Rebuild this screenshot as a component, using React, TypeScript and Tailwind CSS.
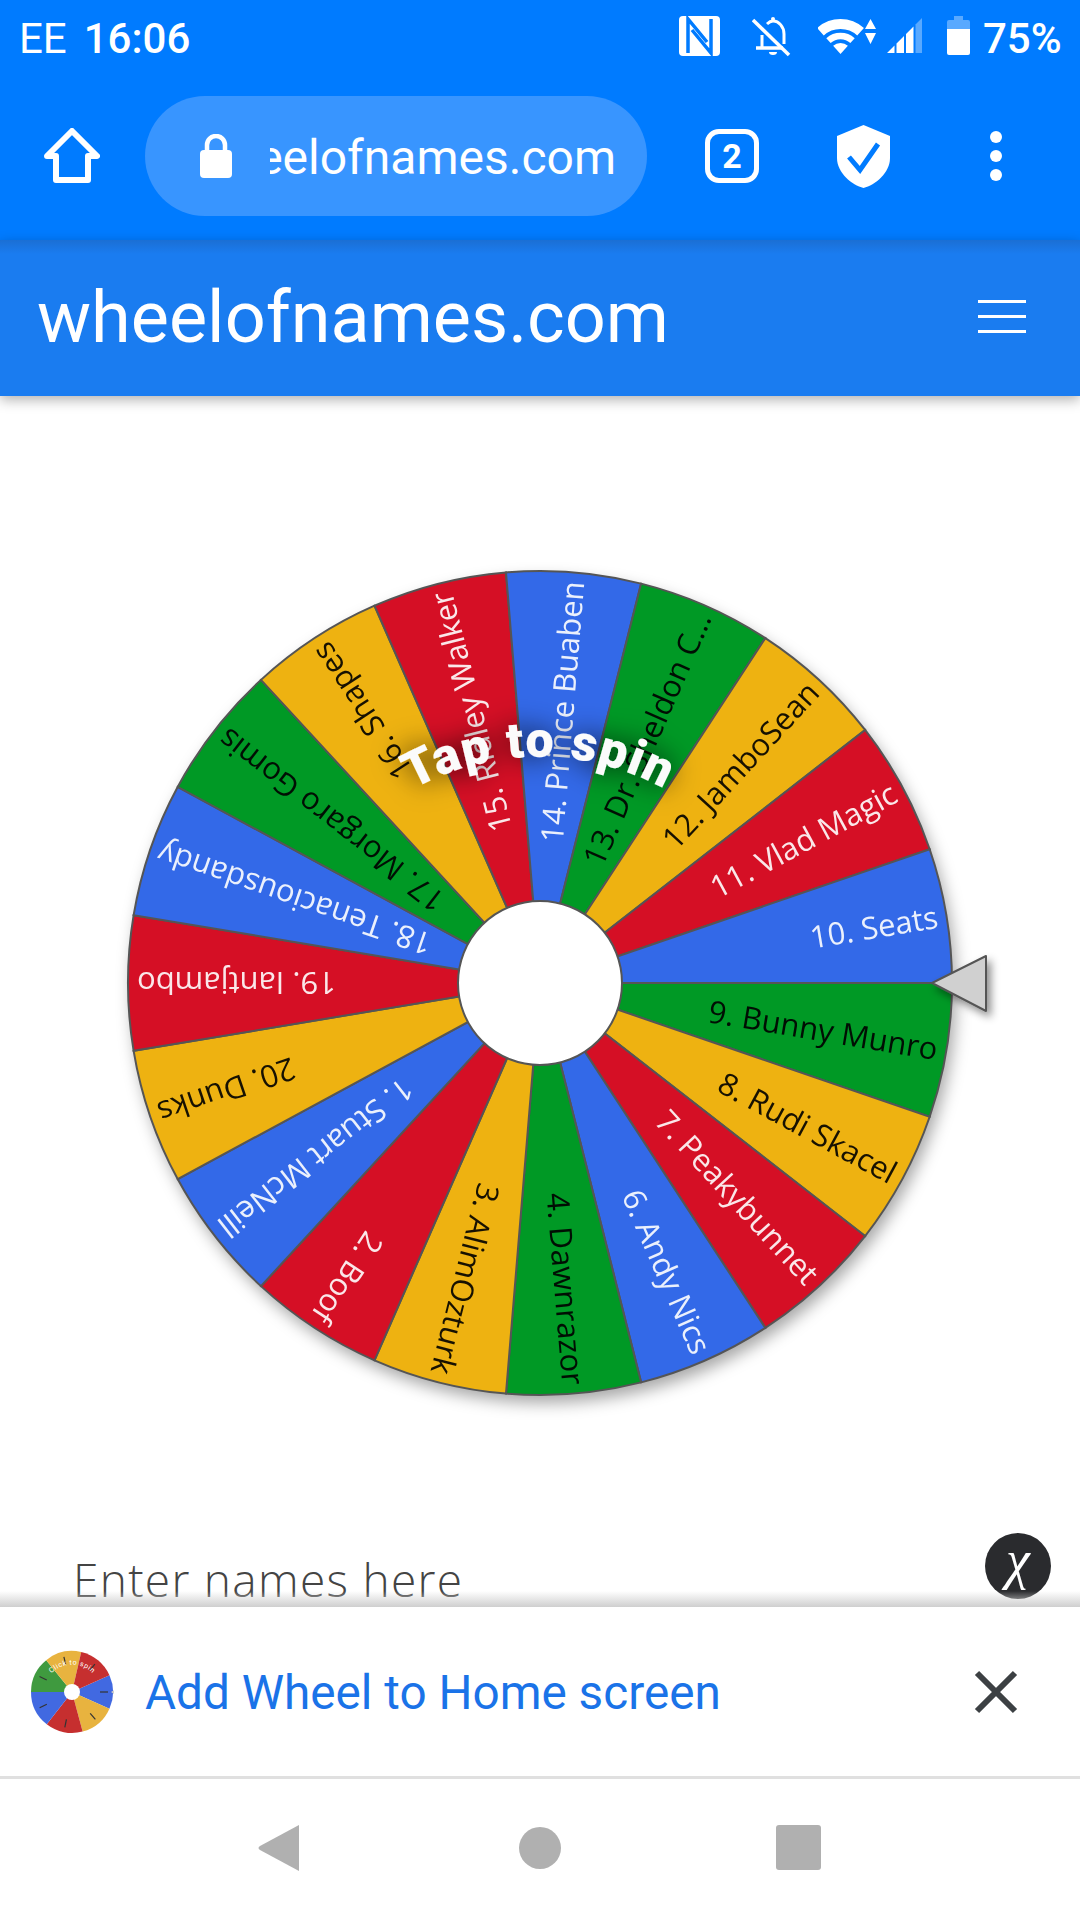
const names = ["9. Bunny Munro","8. Rudi Skacel","7. Peakybunnet","6. Andy Nics","4. Dawnrazor","3. AlimOzturk","2. Boof","1. Stuart McNeill","20. Dunks","19. Iantjambo","18. Tenaciousdandy","17. Morgaro Gomis","16. Shapes","15. Ridley Walker","14. Prince Buaben","13. Dr. Sheldon C...","12. JamboSean","11. Vlad Magic","10. Seats"];
const colors = ["#009925","#eeb211","#d50f25","#3369e8"];
const textColors = ["#000000","#000000","#ffffff","#ffffff"];
const STEP = 360 / 19;
const CX = 540, CY = 983, R = 412;

function pt(cx: number, cy: number, r: number, deg: number) {
  const a = (deg * Math.PI) / 180;
  return `${(cx + r * Math.cos(a)).toFixed(2)} ${(cy + r * Math.sin(a)).toFixed(2)}`;
}

function Wheel() {
  return (
    <svg className="block" width="1080" height="1060" viewBox="0 396 1080 1060">
      <defs>
        <filter id="ws" x="-10%" y="-10%" width="120%" height="120%">
          <feDropShadow dx="4" dy="8" stdDeviation="8" floodColor="#000" floodOpacity="0.35" />
        </filter>
        <filter id="ps" x="-40%" y="-40%" width="190%" height="190%">
          <feDropShadow dx="4" dy="5" stdDeviation="4" floodColor="#000" floodOpacity="0.45" />
        </filter>
        <filter id="ts" x="-20%" y="-50%" width="140%" height="200%">
          <feDropShadow dx="0" dy="0" stdDeviation="14" floodColor="#000" floodOpacity="0.85" />
        </filter>
        <path id="arc" d="M 394 801 A 260 260 0 0 1 684 801" />
      </defs>
      <circle cx={CX} cy={CY} r={R} fill="#777" filter="url(#ws)" />
      {names.map((n, i) => {
        const a0 = i * STEP, a1 = (i + 1) * STEP, mid = a0 + STEP / 2;
        const c = i < 8 ? i % 4 : (i - 7) % 4;
        return (
          <g key={n}>
            <path d={`M ${CX} ${CY} L ${pt(CX, CY, R, a0)} A ${R} ${R} 0 0 1 ${pt(CX, CY, R, a1)} Z`} fill={colors[c]} stroke="#555" strokeWidth="2" />
            <text x={CX + R - 9} y={CY + 11} textAnchor="end" fontSize="31" fontFamily="'Open Sans', sans-serif" fill={textColors[c]} transform={`rotate(${mid.toFixed(3)} ${CX} ${CY})`} opacity="0.9">{n}</text>
          </g>
        );
      })}
      <circle cx={CX} cy={CY} r={82} fill="#fff" stroke="#555" strokeWidth="2" />
      <path d="M932 983 L986 956 L986 1011 Z" fill="#d0d0d0" stroke="#555" strokeWidth="2" strokeLinejoin="round" filter="url(#ps)" />
      <text fontSize="50" fontWeight="900" fontFamily="Roboto, sans-serif" fill="#fbfbfb" letterSpacing="1.500" filter="url(#ts)">
        <textPath href="#arc" startOffset="50%" textAnchor="middle">Tap to spin</textPath>
      </text>
    </svg>
  );
}

function MiniWheel() {
  const seq = [
    { c: "#4169e1", a: -24, b: 24 },
    { c: "#e8b33f", a: 24, b: 75 },
    { c: "#c62f2f", a: 75, b: 128 },
    { c: "#4169e1", a: 128, b: 180 },
    { c: "#3f9a3f", a: 180, b: 231 },
    { c: "#e8b33f", a: 231, b: 283 },
    { c: "#c62f2f", a: 283, b: 336 },
  ];
  return (
    <svg width="84" height="84" viewBox="-42 -42 84 84" className="shrink-0">
      <defs>
        <path id="miniarc" d="M-25 -13 A29 29 0 0 1 25 -13" />
      </defs>
      {seq.map((s, i) => {
        const m = (s.a + s.b) / 2;
        return (
          <g key={i}>
            <path d={`M0 0 L${pt(0, 0, 41, s.a)} A41 41 0 0 1 ${pt(0, 0, 41, s.b)} Z`} fill={s.c} />
            <path d={`M${pt(0, 0, 28, m)} L${pt(0, 0, 36, m)}`} stroke="#333" strokeWidth="1.200" />
          </g>
        );
      })}
      <circle r="8" fill="#fff" />
      <text fontSize="7" fill="#fff" fontFamily="Roboto, sans-serif" letterSpacing="0.600">
        <textPath href="#miniarc" startOffset="50%" textAnchor="middle">Click to spin</textPath>
      </text>
      <path d="M39 0 L43 -2.500 L43 2.500 Z" fill="#ccc" />
    </svg>
  );
}

function Band({ r, w }: { r: number; w: number }) {
  return <path d={`M${pt(22.5, 37, r, -132)} A${r} ${r} 0 0 1 ${pt(22.5, 37, r, -48)}`} fill="none" stroke="#fff" strokeWidth={w} />;
}

function StatusIcons() {
  return (
    <div className="flex items-start absolute left-[679px] top-[16px]">
      <svg width="41" height="40" viewBox="0 0 41 40" className="shrink-0">
        <rect width="41" height="40" rx="4" fill="#fff" />
        <path d="M9 37 V3 L28 26 M32 3 V37 L13 14" fill="none" stroke="#007bff" strokeWidth="3.500" />
      </svg>
      <svg width="40" height="42" viewBox="0 0 40 42" className="shrink-0 ml-[32px]" fill="none" stroke="#fff">
        <path d="M10 19 V32 M15 8 C17 6 20 5 21 5 C27 5 32 11 32 18 V28" strokeWidth="3" />
        <path d="M4 32 H31" strokeWidth="3.500" />
        <path d="M1 4 L37 39" strokeWidth="3.500" />
        <circle cx="21" cy="3" r="2" fill="#fff" stroke="none" />
        <path d="M17 36 H25 A4 3 0 0 1 17 36 Z" fill="#fff" stroke="none" />
      </svg>
      <svg width="58" height="38" viewBox="0 0 58 38" className="shrink-0 ml-[26px] mt-[1px]">
        <Band r={30} w={10} />
        <Band r={18} w={6.5} />
        <path d={`M22.500 37 L${pt(22.5, 37, 11, -132)} A11 11 0 0 1 ${pt(22.5, 37, 11, -48)} Z`} fill="#fff" />
        <path d="M52.500 2 L58 12 H47 Z M52.500 27 L58 16 H47 Z" fill="#fff" />
      </svg>
      <svg width="35" height="35" viewBox="0 0 35 35" className="shrink-0 ml-[11px] mt-[2px]">
        <path d="M0 35 L7.500 27.500 V35 Z M9.500 35 V25.500 L17 18 V35 Z M19 35 V16 L26.500 8.500 V35 Z" fill="#fff" />
        <path d="M28.500 35 V6.500 L35 0 V35 Z" fill="#fff" opacity="0.35" />
      </svg>
      <svg width="23" height="39" viewBox="0 0 23 39" className="shrink-0 ml-[25px]">
        <path d="M7 0h9v4h5a2 2 0 0 1 2 2v7H0V6a2 2 0 0 1 2-2h5z" fill="#fff" opacity="0.35" />
        <path d="M0 13h23v24a2 2 0 0 1-2 2H2a2 2 0 0 1-2-2z" fill="#fff" />
      </svg>
    </div>
  );
}

function TopChrome() {
  return (
    <div className="relative h-[240px] bg-[#007bff] text-white shrink-0 font-['Roboto',sans-serif]">
      <div className="absolute left-[19px] top-[16px] h-[44px] flex items-center gap-[17px] text-[42px]">
        <span className="font-normal">EE</span>
        <span className="font-medium">16:06</span>
      </div>
      <StatusIcons />
      <div className="absolute left-[983px] top-[16px] h-[44px] flex items-center text-[42px] font-medium">75%</div>
      <div className="flex items-center absolute left-0 right-0 top-[96px] h-[120px]">
        <svg width="56" height="56" viewBox="0 0 56 56" className="ml-[44px] shrink-0" fill="none" stroke="#fff" strokeWidth="6" strokeLinejoin="round">
          <path d="M28 3 L53 28 H44 V52 H12 V28 H3 Z" />
        </svg>
        <div className="ml-[45px] w-[502px] h-[120px] rounded-[60px] bg-[#3895ff] flex items-center shrink-0">
          <svg width="34" height="44" viewBox="0 0 34 44" className="ml-[54px] shrink-0" fill="#fff">
            <path d="M8 18 V11 a9 9 0 0 1 18 0 V18" fill="none" stroke="#fff" strokeWidth="4.500" />
            <rect x="1" y="16" width="32" height="28" rx="4" />
          </svg>
          <div className="ml-[37px] w-[346px] overflow-hidden flex justify-end whitespace-nowrap text-[48px] leading-none pt-[3px]">wheelofnames.com</div>
        </div>
        <div className="ml-[58px] w-[54px] h-[54px] rounded-[14px] border-[5px] border-white flex items-center justify-center text-[34px] font-bold shrink-0">2</div>
        <svg width="53" height="63" viewBox="0 0 53 63" className="ml-[78px] shrink-0">
          <path fill="#fff" d="M26.500 0 L53 11 V33 C53 48 38 60 26.500 63 C15 60 0 48 0 33 V11 Z" />
          <path d="M12 32 L23 45 L41 19" fill="none" stroke="#007bff" strokeWidth="5" />
        </svg>
        <div className="ml-[100px] flex flex-col gap-[7px] shrink-0">
          <div className="w-[12px] h-[12px] rounded-full bg-white" />
          <div className="w-[12px] h-[12px] rounded-full bg-white" />
          <div className="w-[12px] h-[12px] rounded-full bg-white" />
        </div>
      </div>
    </div>
  );
}

export default function App() {
  return (
    <div className="w-[1080px] h-[1920px] flex flex-col bg-white overflow-hidden font-['Roboto',sans-serif]">
      <TopChrome />
      <header className="relative z-10 h-[156px] bg-[#1a7cf0] flex items-center justify-between pl-[37px] pr-[54px] shrink-0 shadow-[0_4px_12px_rgba(0,0,0,0.3)]">
        <div className="absolute left-0 right-0 top-0 h-[14px] bg-gradient-to-b from-[#1b6fd4] to-transparent" />
        <span className="text-white text-[72px] leading-none relative">wheelofnames.com</span>
        <div className="flex flex-col gap-[12px] relative mb-[4px]">
          <div className="w-[48px] h-[3px] bg-white" />
          <div className="w-[48px] h-[3px] bg-white" />
          <div className="w-[48px] h-[3px] bg-white" />
        </div>
      </header>
      <main className="relative h-[1211px] shrink-0 overflow-hidden">
        <Wheel />
        <div className="pl-[73px] mt-[97px] text-[46px] leading-[52px] font-light tracking-[1.3px] text-[#444] font-['Open_Sans',sans-serif]">Enter names here</div>
        <div className="absolute left-[985px] top-[1137px] w-[66px] h-[66px] rounded-full bg-[#2a2b2e] flex items-center justify-center text-white text-[54px] italic leading-none pb-[12px] font-['Liberation_Serif',serif]">χ</div>
        <div className="absolute left-0 right-0 bottom-0 h-[16px] bg-gradient-to-b from-transparent to-[#cfcfcf]" />
      </main>
      <div className="h-[169px] flex items-center shrink-0 border-b-[3px] border-[#e0e0e0] box-content">
        <div className="ml-[30px]"><MiniWheel /></div>
        <span className="ml-[31px] text-[47.7px] text-[#1a73e8] pt-[5px]">Add Wheel to Home screen</span>
        <svg width="44" height="44" viewBox="0 0 44 44" className="ml-auto mr-[62px]" stroke="#3c4043" strokeWidth="6">
          <path d="M3 3 L41 41 M41 3 L3 41" />
        </svg>
      </div>
      <nav className="flex-1 flex items-center pb-[4px]">
        <svg width="44" height="50" viewBox="0 0 44 50" className="ml-[257px]"><path d="M42 2 V48 L3 27 Q0 25 3 23 Z" fill="#b0b0b0" /></svg>
        <div className="ml-[218px] w-[42px] h-[42px] rounded-full bg-[#b0b0b0]" />
        <div className="ml-[215px] w-[45px] h-[45px] rounded-[3px] bg-[#b0b0b0]" />
      </nav>
    </div>
  );
}
